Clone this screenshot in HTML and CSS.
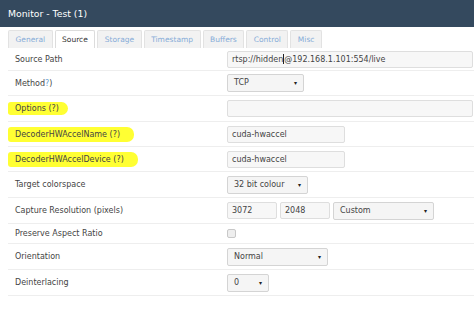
FILE: index.html
```html
<!DOCTYPE html>
<html>
<head>
<meta charset="utf-8">
<link rel="stylesheet" href="styles.css">
</head>
<body>
<div class="header">Monitor - Test (1)</div>
<div class="tabs">
  <div class="tab">General</div>
  <div class="tab active">Source</div>
  <div class="tab">Storage</div>
  <div class="tab">Timestamp</div>
  <div class="tab">Buffers</div>
  <div class="tab">Control</div>
  <div class="tab">Misc</div>
</div>
<div class="form">
  <div class="row first">
    <div class="label">Source Path</div>
    <div class="field"><div class="input wide">rtsp://hidden<span class="caret"></span>@192.168.1.101:554/live</div></div>
  </div>
  <div class="row">
    <div class="label">Method<span class="help">?</span>)</div>
    <div class="field"><div class="select w-method">TCP<span class="arrow">&#9662;</span></div></div>
  </div>
  <div class="row tall">
    <div class="label"><span class="hl hl-opt">Options (?)</span></div>
    <div class="field"><div class="input wide"></div></div>
  </div>
  <div class="row">
    <div class="label"><span class="hl hl-name">DecoderHWAccelName (?)</span></div>
    <div class="field"><div class="input w-text">cuda-hwaccel</div></div>
  </div>
  <div class="row">
    <div class="label"><span class="hl hl-dev">DecoderHWAccelDevice (?)</span></div>
    <div class="field"><div class="input w-text">cuda-hwaccel</div></div>
  </div>
  <div class="row tall">
    <div class="label">Target colorspace</div>
    <div class="field"><div class="select w-color">32 bit colour<span class="arrow">&#9662;</span></div></div>
  </div>
  <div class="row tall">
    <div class="label">Capture Resolution (pixels)</div>
    <div class="field">
      <div class="input w-num">3072</div>
      <div class="input w-num">2048</div>
      <div class="select w-custom">Custom<span class="arrow">&#9662;</span></div>
    </div>
  </div>
  <div class="row check">
    <div class="label">Preserve Aspect Ratio</div>
    <div class="field"><div class="checkbox"></div></div>
  </div>
  <div class="row tall">
    <div class="label">Orientation</div>
    <div class="field"><div class="select w-orient">Normal<span class="arrow">&#9662;</span></div></div>
  </div>
  <div class="row tall">
    <div class="label">Deinterlacing</div>
    <div class="field"><div class="select w-deint">0<span class="arrow">&#9662;</span></div></div>
  </div>
</div>
</body>
</html>
```
FILE: styles.css
```css
* { box-sizing: border-box; }
html, body { margin: 0; padding: 0; background: #fff; }
body {
  font-family: "DejaVu Sans", Verdana, sans-serif;
  font-size: 8px;
  color: #444;
  width: 474px;
  overflow: hidden;
}
.header {
  height: 27px;
  background: #34495e;
  color: #fff;
  font-size: 9.3px;
  padding-left: 8px;
  line-height: 27px;
}
.tabs {
  display: flex;
  gap: 2px;
  padding: 3px 0 0 8px;
  height: 21px;
}
.tab {
  flex-shrink: 0;
  height: 18px;
  padding: 0 6.5px;
  line-height: 17px;
  background: #f2f2f2;
  border: 1px solid #e2e2e2;
  border-bottom: none;
  border-radius: 2px 2px 0 0;
  color: #86acd8;
  font-size: 7.5px;
}
.tab.active {
  background: #fff;
  color: #333;
  border-color: #dcdcdc;
}
.form { margin-left: 8px; }
.row {
  display: flex;
  align-items: center;
  height: 25px;
  border-bottom: 1px solid #eeeeee;
}
.row.first { height: 23px; }
.row.tall { height: 26px; }
.row.check { height: 20px; }
.label {
  flex-shrink: 0;
  width: 219px;
  padding-left: 7px;
  white-space: nowrap;
}
.help { color: #6a9fd4; }
.hl {
  background: #ffff33;
  padding: 2px 9px 2px 7px;
  margin-left: -7px;
  border-radius: 3px 7px 7px 3px;
}
.hl-name, .hl-dev { padding-top: 3px; padding-bottom: 3px; padding-right: 14px; }
.field {
  display: flex;
  gap: 3px;
  align-items: center;
  flex-shrink: 0;
}
.input {
  flex-shrink: 0;
  height: 17px;
  line-height: 15px;
  background: #f7f7f7;
  border: 1px solid #dedede;
  border-radius: 2px;
  padding: 0 4px;
  color: #444;
  white-space: nowrap;
}
.input.wide { width: 246px; }
.w-text { width: 118px; }
.w-num { width: 50px; }
.caret {
  display: inline-block;
  width: 1px;
  height: 10px;
  background: #222;
  vertical-align: -2px;
}
.select {
  flex-shrink: 0;
  position: relative;
  height: 18px;
  line-height: 16px;
  background: #f5f5f5;
  border: 1px solid #d4d4d4;
  border-radius: 2px;
  padding: 0 6px;
  color: #444;
  white-space: nowrap;
}
.arrow {
  position: absolute;
  right: 6px;
  top: 0;
  font-size: 6px;
  color: #222;
}
.w-method { width: 77px; }
.w-color { width: 81px; }
.w-custom { width: 101px; }
.w-orient { width: 101px; }
.w-deint { width: 42px; }
.checkbox {
  width: 9px;
  height: 9px;
  border: 1px solid #c8c8c8;
  background: #eee;
  border-radius: 2px;
}
```
